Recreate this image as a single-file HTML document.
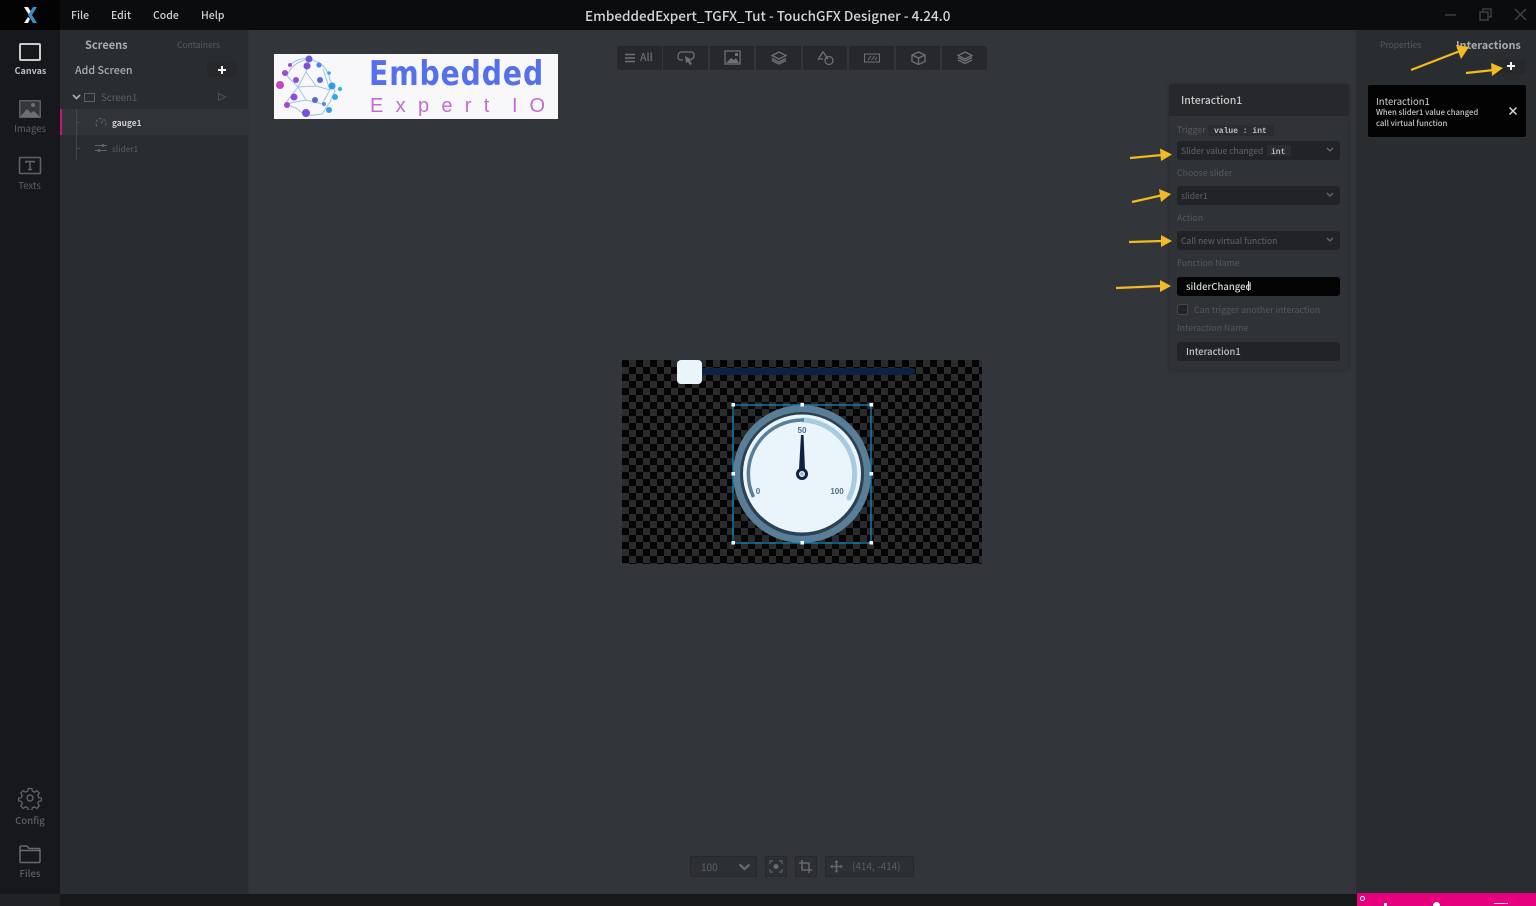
<!DOCTYPE html>
<html><head><meta charset="utf-8"><title>TouchGFX Designer</title>
<style>
html,body{margin:0;padding:0;width:1536px;height:906px;overflow:hidden;background:#323539}
#r{position:absolute;left:0;top:0;width:1536px;height:906px;overflow:hidden;filter:blur(.35px);font-family:"Noto Sans CJK JP","Liberation Sans",sans-serif;background:#323539}
#r div,#r span.t,#r svg{position:absolute}
.t{position:absolute;white-space:nowrap;line-height:16px;height:16px}
.m{font-family:"Liberation Mono",monospace;font-weight:bold}
.sel{left:1177px;width:163px;height:19px;background:#212326;border-radius:3px}
.sel .c{left:149px;top:6px}
.tb{top:46px;height:24px;background:#26282c}
</style></head><body><div id="r">

<!-- panels -->
<div style="left:0;top:0;width:1536px;height:30px;background:#0b0c0d"></div>
<div style="left:0;top:0;width:60px;height:30px;background:#030304"></div>
<div style="left:0;top:30px;width:60px;height:864px;background:#17181b"></div>
<div style="left:60px;top:30px;width:188px;height:864px;background:#2a2d30"></div>
<div style="left:248px;top:30px;width:2px;height:864px;background:#2f3236"></div>
<div style="left:1356px;top:30px;width:180px;height:864px;background:#2a2d30"></div>
<div style="left:0;top:894px;width:1536px;height:12px;background:#17181a"></div>
<div style="left:0;top:894px;width:60px;height:12px;background:#202225"></div>
<div style="left:1357px;top:893px;width:179px;height:13px;background:#e6007e"></div>
<div style="left:1360px;top:896px;width:3px;height:3px;border:1px solid #fff;border-radius:50%"></div>
<div style="left:1384px;top:903px;width:3px;height:3px;background:#fff"></div>
<div style="left:1433px;top:902px;width:7px;height:4px;background:#fff;border-radius:4px 4px 0 0"></div>
<div style="left:1494px;top:903px;width:14px;height:1px;background:#ddd"></div>

<!-- logo -->
<svg style="left:23px;top:6px" width="16" height="18" viewBox="0 0 16 18"><path d="M1 1h4l3 5-2 3z" fill="#f2f4f6"/><path d="M1 17h4l2-4-2-2z" fill="#f2f4f6"/><path d="M10 1h4l-5 8 5 8h-4l-5-8z" fill="#3b8fc4"/></svg>

<!-- menu -->
<span class="t" style="left:71px;top:8px;font-size:10.5px;font-weight:500;color:#cfd1d3">File</span>
<span class="t" style="left:111px;top:8px;font-size:10.5px;font-weight:500;color:#cfd1d3">Edit</span>
<span class="t" style="left:153px;top:8px;font-size:10.5px;font-weight:500;color:#cfd1d3">Code</span>
<span class="t" style="left:201px;top:8px;font-size:10.5px;font-weight:500;color:#cfd1d3">Help</span>
<span class="t" style="left:585px;top:7px;font-size:13.5px;font-weight:500;color:#d3d5d7">EmbeddedExpert_TGFX_Tut - TouchGFX Designer - 4.24.0</span>

<!-- window controls -->
<svg style="left:1440px;top:6px" width="90" height="18" fill="none" stroke="#3a3d40" stroke-width="1.6"><path d="M5 9h11"/><rect x="40" y="6" width="8" height="8"/><path d="M43 6V3h8v8h-3"/><path d="M75 3l11 11M86 3L75 14"/></svg>

<!-- left rail -->
<svg style="left:18px;top:42px" width="24" height="20" fill="none" stroke="#c9cbcd" stroke-width="2"><rect x="2" y="2" width="20" height="16" rx="1"/></svg>
<span class="t" style="left:0;width:61px;text-align:center;top:63px;font-size:9px;font-weight:700;color:#bcbfc2">Canvas</span>
<svg style="left:18px;top:99px" width="24" height="20"><rect x="1" y="1" width="22" height="18" rx="1" fill="#5b5e62"/><rect x="2.500" y="2.500" width="19" height="15" fill="#34363a"/><path d="M2 18l7-8 4 4 3-2 6 6z" fill="#6b6e72"/><circle cx="15" cy="6" r="2" fill="#6b6e72"/></svg>
<span class="t" style="left:0;width:60px;text-align:center;top:120px;font-size:9.5px;color:#5d6064">Images</span>
<svg style="left:18px;top:156px" width="24" height="19" fill="none" stroke="#5f6266" stroke-width="1.600"><rect x="1.500" y="1.500" width="21" height="16" rx="1"/><path d="M8 7V5.500h8V7M12 5.500V13.500M10 13.500h4"/></svg>
<span class="t" style="left:0;width:59px;text-align:center;top:177px;font-size:9.5px;color:#5d6064">Texts</span>
<svg style="left:18px;top:786px" width="24" height="24" viewBox="0 0 24 24" fill="none" stroke="#5f6266" stroke-width="1.400"><circle cx="12" cy="12" r="3"/><path d="M10 1.500h4l.6 3 2.300 1 2.600-1.700 2.700 2.900-1.700 2.500 1 2.300 3 .6v3l-3 .6-1 2.300 1.700 2.500-2.700 2.900-2.600-1.700-2.300 1-.6 2.800h-4l-.6-2.800-2.300-1-2.600 1.700-2.700-2.900 1.700-2.500-1-2.300-3-.6v-3l3-.6 1-2.300-1.700-2.500 2.700-2.900 2.600 1.700 2.300-1z" transform="translate(1.100 1.100) scale(.91)"/></svg>
<span class="t" style="left:0;width:60px;text-align:center;top:812px;font-size:9.500px;font-weight:500;color:#5d6064">Config</span>
<svg style="left:18px;top:844px" width="24" height="20" fill="none" stroke="#65686c" stroke-width="1.500"><path d="M2 17.500V3.500q0-1.500 1.500-1.500H9l2 2.500h9.500q1.500 0 1.500 1.500v11.500q0 1-1 1H3q-1 0-1-1z"/><path d="M2 8q0-1.500 1.500-1.500h17Q22 6.500 22 8"/></svg>
<span class="t" style="left:0;width:60px;text-align:center;top:865px;font-size:9.500px;font-weight:500;color:#5d6064">Files</span>

<!-- screens panel -->
<span class="t" style="left:85px;top:37px;font-size:11px;font-weight:700;color:#a9acaf">Screens</span>
<span class="t" style="left:177px;top:37px;font-size:8.500px;color:#585b60">Containers</span>
<span class="t" style="left:75px;top:63px;font-size:10.700px;font-weight:500;color:#a9acaf">Add Screen</span>
<div style="left:207px;top:62px;width:30px;height:15px;background:#26282b;border-radius:3px"></div>
<svg style="left:218px;top:66px" width="8" height="8"><path d="M4 0v8M0 4h8" stroke="#f2f2f2" stroke-width="2"/></svg>
<svg style="left:72px;top:94px" width="9" height="7" fill="none"><path d="M1 1l3.500 3.500L8 1" stroke="#a9acaf" stroke-width="1.800"/></svg>
<svg style="left:84px;top:92px" width="12" height="11" fill="none"><rect x=".5" y="1.500" width="10" height="8" stroke="#5d6064"/></svg>
<span class="t" style="left:101px;top:89px;font-size:9.700px;color:#5b5e63">Screen1</span>
<svg style="left:217px;top:92px" width="10" height="10" fill="none"><path d="M1.500 1.500l7 3.500-7 3.500z" stroke="#4e5155"/></svg>
<div style="left:60px;top:109px;width:188px;height:26px;background:#303338"></div>
<div style="left:60px;top:109px;width:2px;height:26px;background:#c2147a"></div>
<div style="left:76px;top:109px;width:1px;height:51px;background:#44474b"></div>
<div style="left:77px;top:122px;width:3px;height:1px;background:#44474b"></div>
<div style="left:77px;top:148px;width:3px;height:1px;background:#44474b"></div>
<svg style="left:95px;top:117px" width="12" height="11" fill="none" stroke="#606367"><path d="M2 9.500A5 5 0 1 1 10 9.500" stroke-dasharray="3 1.500"/><path d="M6 6.500L8 3.500"/></svg>
<span class="t" style="left:112px;top:115px;font-size:8.300px;font-weight:700;color:#cfd1d3">gauge1</span>
<svg style="left:95px;top:143px" width="12" height="10" fill="none" stroke="#62656a"><path d="M0 2.500h12M0 7.500h12"/><circle cx="8" cy="2.500" r="1" fill="#62656a"/><circle cx="4" cy="7.500" r="1" fill="#62656a"/></svg>
<span class="t" style="left:112px;top:141px;font-size:8.300px;color:#5a5d62">slider1</span>

<!-- embedded expert image -->
<div style="left:274px;top:54px;width:284px;height:64.500px;background:#f8f8fb"></div>
<svg style="left:274px;top:54px" width="70" height="64" fill="none">
<g stroke="#9fc4e6" stroke-width="1"><path d="M13 22Q18 8 35 5q18 4 21 21l5 11-5 11-8 12-16 2"/><path d="M16 11Q25 3 35 5M13 22l11 11 18-1 14 4M11 50l21-4 16 4M24 33l-13 17M24 33l8 13M32 18l10 14M35 5l-3 13-8 15M49 15l7 21-8 14M32 62L22 54 11 50M42 32l14 4"/></g>
<circle cx="6" cy="31" r="4" fill="#c448bd"/><circle cx="16" cy="11" r="2" fill="#a84ad0"/><circle cx="11" cy="19" r="3" fill="#a349cf"/><circle cx="13" cy="51" r="3" fill="#9e4ad2"/>
<circle cx="33" cy="12" r="3.500" fill="#7f4fdc"/><circle cx="35" cy="5" r="3.500" fill="#6a58e4"/><circle cx="22" cy="26" r="3" fill="#8e4dd6"/><circle cx="20" cy="43" r="3.500" fill="#8a4ed8"/><circle cx="32" cy="59" r="4" fill="#7a50de"/>
<circle cx="45" cy="11" r="2.600" fill="#4f87e8"/><circle cx="46" cy="26" r="3" fill="#5566e6"/><circle cx="41" cy="46" r="3" fill="#5a62e4"/><circle cx="50" cy="50" r="2" fill="#4a8ee8"/>
<circle cx="58" cy="32" r="3.500" fill="#2d9ee8"/><circle cx="55" cy="19" r="1.800" fill="#3aa4e8"/><circle cx="66" cy="35" r="2.200" fill="#36b7e8"/><circle cx="61" cy="43" r="3" fill="#2da8e8"/><circle cx="55" cy="56" r="3" fill="#2f9fe8"/>
</svg>
<span class="t" style="left:369px;top:54px;height:40px;line-height:40px;font-size:34px;font-weight:700;letter-spacing:1.100px;color:#5570ea;font-family:'DejaVu Sans',sans-serif;transform-origin:0 50%;transform:scaleX(.83)">Embedded</span>
<span class="t" style="left:370px;top:93px;height:26px;line-height:26px;font-size:20px;letter-spacing:12.300px;color:#c26dcd;font-family:'Liberation Sans',sans-serif;font-weight:normal">Expert</span>
<span class="t" style="left:512px;top:93px;height:26px;line-height:26px;font-size:20px;letter-spacing:12px;color:#c26dcd;font-family:'Liberation Sans',sans-serif">IO</span>

<!-- widget toolbar -->
<div class="tb" style="left:617px;width:45px;border-radius:3px 0 0 3px"></div>
<div class="tb" style="left:663px;width:45px"></div>
<div class="tb" style="left:710px;width:44px"></div>
<div class="tb" style="left:756px;width:45px"></div>
<div class="tb" style="left:803px;width:44px"></div>
<div class="tb" style="left:849px;width:45px"></div>
<div class="tb" style="left:896px;width:44px"></div>
<div class="tb" style="left:942px;width:45px;border-radius:0 3px 3px 0"></div>
<svg style="left:625px;top:53px" width="10" height="10" stroke="#6d7074" stroke-width="1.500"><path d="M0 1.500h10M0 5h10M0 8.500h10"/></svg>
<span class="t" style="left:640px;top:50px;font-size:10.500px;font-weight:500;color:#6d7074">All</span>
<svg style="left:677px;top:50px" width="18" height="16" fill="none" stroke="#6d7074" stroke-width="1.300"><path d="M6 10H4Q1 10 1 6.500T4 2h10q3 0 3 3.500t-3 3.500"/><path d="M8 6l7 4-2 1 2 3-2 1-2-3-2 1z" fill="#6d7074" stroke="none"/></svg>
<svg style="left:724px;top:50px" width="17" height="15" fill="none"><rect x="1" y="1" width="15" height="13" stroke="#6d7074" stroke-width="1.300"/><path d="M2 13l5-5 3 2 2-2 3 5zM11 3h3v3h-3z" fill="#6d7074"/></svg>
<svg style="left:771px;top:51px" width="16" height="14" fill="none" stroke="#6d7074" stroke-width="1.300"><path d="M8 1l7 3.500L8 8 1 4.500zM1 7.500L8 11l7-3.500M1 9.500L8 13l7-3.500"/></svg>
<svg style="left:817px;top:50px" width="18" height="16" fill="none" stroke="#6d7074" stroke-width="1.300"><path d="M6 1.500l4.500 7H9M6 1.500L1.500 9H6"/><circle cx="12" cy="10.500" r="4"/></svg>
<svg style="left:864px;top:53px" width="16" height="10" fill="none" stroke="#6d7074"><rect x=".5" y="1" width="15" height="8"/><path d="M4 7l3-4M7.500 7l3-4M11 7l2-3" /></svg>
<svg style="left:911px;top:51px" width="15" height="14" fill="none" stroke="#6d7074" stroke-width="1.300"><path d="M7.500 1L14 4v6.500L7.500 13.500 1 10.500V4zM1 4l6.500 3L14 4M7.500 7v6.500"/></svg>
<svg style="left:957px;top:51px" width="16" height="14" fill="none" stroke="#6d7074" stroke-width="1.300"><path d="M8 1l7 3.500L8 8 1 4.500zM1 6.500L8 10l7-3.500M1 9L8 12.500 15 9"/></svg>

<!-- checker canvas -->
<div style="left:622px;top:360px;width:360px;height:204px;background-color:#040405;background-image:conic-gradient(#2a2b2d 25%,#040405 0 50%,#2a2b2d 0 75%,#040405 0);background-size:14px 14px;background-position:0 0"></div>
<!-- slider -->
<div style="left:702px;top:368px;width:213px;height:7px;background:#0f2042;border-radius:0 4px 4px 0"></div>
<div style="left:677px;top:360px;width:25px;height:24px;background:#e9f5fb;border-radius:4px"></div>

<!-- gauge -->
<svg style="left:725px;top:397px" width="155" height="155" viewBox="0 0 155 155">
<circle cx="77" cy="77" r="69" fill="#587f97"/>
<circle cx="77" cy="77" r="62" fill="#2c4254"/>
<circle cx="77" cy="76.500" r="59" fill="#e9f5fb"/>
<path d="M78 23A54 54 0 0 1 124 101" fill="none" stroke="#a8cbdf" stroke-width="5" stroke-linecap="round"/>
<path d="M28.500 100A54 54 0 0 1 79 23" fill="none" stroke="#587f97" stroke-width="3.500"/>
<path d="M76 38h2.500L80 72h-6z" fill="#0f2042"/>
<circle cx="77" cy="77" r="4.500" fill="#e9f5fb" stroke="#0f2042" stroke-width="3"/>
<circle cx="77" cy="77" r="1.800" fill="#9db6c5"/>
<rect x="8" y="8" width="138" height="138" fill="none" stroke="#1487bd" stroke-width="1.300"/>
<g fill="#fff"><rect x="6.500" y="6" width="3.500" height="3.500"/><rect x="75.500" y="6" width="3.500" height="3.500"/><rect x="144.500" y="6" width="3.500" height="3.500"/><rect x="6.500" y="75" width="3.500" height="3.500"/><rect x="144.500" y="75" width="3.500" height="3.500"/><rect x="6.500" y="144" width="3.500" height="3.500"/><rect x="75.500" y="144" width="3.500" height="3.500"/><rect x="144.500" y="144" width="3.500" height="3.500"/></g>
<text x="77" y="36" font-size="8" font-weight="700" text-anchor="middle" fill="#4f6f85" font-family="Liberation Sans">50</text>
<text x="33" y="97" font-size="8" font-weight="700" text-anchor="middle" fill="#4f6f85" font-family="Liberation Sans">0</text>
<text x="112" y="97" font-size="8" font-weight="700" text-anchor="middle" fill="#4f6f85" font-family="Liberation Sans">100</text>
</svg>

<!-- bottom tools -->
<div style="left:690px;top:856px;width:67px;height:21px;background:#2c2f33;border:1px solid #26282c;box-sizing:border-box;border-radius:2px"></div>
<span class="t" style="left:701px;top:859px;font-size:10px;color:#5d6064">100</span>
<svg style="left:738px;top:863px" width="13" height="8" fill="none"><path d="M1.500 1.500L6.500 6l5-4.500" stroke="#66696d" stroke-width="2.200"/></svg>
<div style="left:765px;top:856px;width:22px;height:21px;background:#2c2f33;border:1px solid #26282c;box-sizing:border-box;border-radius:2px"></div>
<svg style="left:769px;top:860px" width="14" height="13" fill="none" stroke="#5d6064" stroke-width="1.200"><path d="M1 4V1h3M10 1h3v3M1 9v3h3M10 12h3V9"/><circle cx="7" cy="6.500" r="2.500" fill="#66696d" stroke="none"/></svg>
<div style="left:795px;top:856px;width:22px;height:21px;background:#2c2f33;border:1px solid #26282c;box-sizing:border-box;border-radius:2px"></div>
<svg style="left:799px;top:860px" width="13" height="13" fill="none" stroke="#66696d" stroke-width="1.500"><path d="M3 0v10h10M0 3h10v10"/></svg>
<div style="left:825px;top:856px;width:89px;height:21px;background:#2c2f33;border:1px solid #26282c;box-sizing:border-box;border-radius:2px"></div>
<svg style="left:830px;top:860px" width="13" height="13" fill="#66696d"><path d="M6 1h1v11H6zM1 6h11v1H1z" stroke="#66696d" stroke-width=".6"/><path d="M6.500 0l2 2.500h-4zM6.500 13l2-2.500h-4zM0 6.500l2.500-2v4zM13 6.500l-2.500-2v4z"/></svg>
<span class="t" style="left:852px;top:858px;font-size:10px;color:#5a5d61">(414, -414)</span>

<!-- interaction panel -->
<div style="left:1169px;top:84px;width:180px;height:286px;background:#2f3237;box-shadow:0 0 3px #26282b;border-radius:3px"></div>
<div style="left:1169px;top:84px;width:180px;height:32px;background:#26282c;border-radius:3px 3px 0 0"></div>
<span class="t" style="left:1181px;top:93px;font-size:10.500px;font-weight:500;color:#c6c8ca">Interaction1</span>
<span class="t" style="top:122px;left:1177px;font-size:8.800px;color:#565a5f">Trigger</span>
<div style="left:1208px;top:125px;width:66px;height:11px;background:#2a2c30"></div>
<span class="t m" style="left:1214px;top:124px;font-size:8px;color:#c0c2c4">value : int</span>
<div class="sel" style="top:141px"><svg class="c" width="8" height="6" fill="none"><path d="M1 1l3 3 3-3" stroke="#676a6e" stroke-width="1.300"/></svg></div>
<span class="t" style="left:1181px;top:143px;font-size:8.500px;color:#62656a">Slider value changed</span>
<div style="left:1267px;top:145px;width:24px;height:11px;background:#2a2c30"></div>
<span class="t m" style="left:1271px;top:145px;font-size:8px;color:#b7b9bb">int</span>
<span class="t" style="top:165px;left:1177px;font-size:8.800px;color:#565a5f">Choose slider</span>
<div class="sel" style="top:186px"><svg class="c" width="8" height="6" fill="none"><path d="M1 1l3 3 3-3" stroke="#676a6e" stroke-width="1.300"/></svg></div>
<span class="t" style="left:1181px;top:188px;font-size:8.500px;color:#5d6065">slider1</span>
<span class="t" style="top:210px;left:1177px;font-size:8.800px;color:#565a5f">Action</span>
<div class="sel" style="top:231px"><svg class="c" width="8" height="6" fill="none"><path d="M1 1l3 3 3-3" stroke="#676a6e" stroke-width="1.300"/></svg></div>
<span class="t" style="left:1181px;top:233px;font-size:8.500px;color:#62656a">Call new virtual function</span>
<span class="t" style="top:255px;left:1177px;font-size:8.800px;color:#565a5f">Function Name</span>
<div class="sel" style="top:277px;background:#040405"></div>
<span class="t" style="left:1186px;top:278px;font-size:9.500px;font-weight:500;color:#d5d7d9">silderChanged</span>
<div style="left:1248px;top:281px;width:1px;height:10px;background:#ddd"></div>
<div style="left:1177px;top:304px;width:9px;height:9px;background:#212326;border:1px solid #44474c;border-radius:2px"></div>
<span class="t" style="left:1194px;top:302px;font-size:8.800px;color:#565a5f">Can trigger another interaction</span>
<span class="t" style="top:320px;left:1177px;font-size:8.800px;color:#565a5f">Interaction Name</span>
<div class="sel" style="top:342px"></div>
<span class="t" style="left:1186px;top:343px;font-size:9.400px;font-weight:500;color:#c0c2c4">Interaction1</span>

<!-- right panel -->
<span class="t" style="left:1380px;top:37px;font-size:8.500px;color:#585b60">Properties</span>
<span class="t" style="left:1456px;top:37px;font-size:10.900px;font-weight:700;color:#a9acaf">Interactions</span>
<div style="left:1495px;top:60px;width:31px;height:14px;background:#26282b;border-radius:3px"></div>
<svg style="left:1507px;top:62px" width="8" height="8"><path d="M4 0v8M0 4h8" stroke="#f2f2f2" stroke-width="2"/></svg>
<div style="left:1368px;top:85px;width:158px;height:52px;background:#030304;border-radius:2px"></div>
<span class="t" style="left:1376px;top:93px;font-size:9.500px;color:#d0d2d4">Interaction1</span>
<span class="t" style="left:1376px;top:105px;font-size:7.700px;font-weight:500;color:#c6c8ca">When slider1 value changed</span>
<span class="t" style="left:1376px;top:116px;font-size:7.700px;font-weight:500;color:#c6c8ca">call virtual function</span>
<svg style="left:1509px;top:107px" width="8" height="8"><path d="M.5.500l7 7M7.500.500l-7 7" stroke="#d8d8d8" stroke-width="1.500"/></svg>

<!-- arrows -->
<svg style="left:0;top:0" width="1536" height="906" fill="#f3bb23" stroke="none">
<g stroke="#f3bb23" stroke-width="2.200" fill="none"><path d="M1130 158L1162 155"/><path d="M1132 202L1163 195"/><path d="M1129 242L1162 241"/><path d="M1116 288L1162 286"/><path d="M1411 70L1460 51"/><path d="M1466 73L1494 70"/></g>
<path d="M1172 154.500L1160 148.500L1161 161zM1171 194L1159 189L1161 202zM1172 241L1161 235L1161 247zM1171 286L1160 280L1160 292zM1469 47L1456 45L1461 59zM1503 68L1491 63L1492 76z"/>
</svg>

</div></body></html>
